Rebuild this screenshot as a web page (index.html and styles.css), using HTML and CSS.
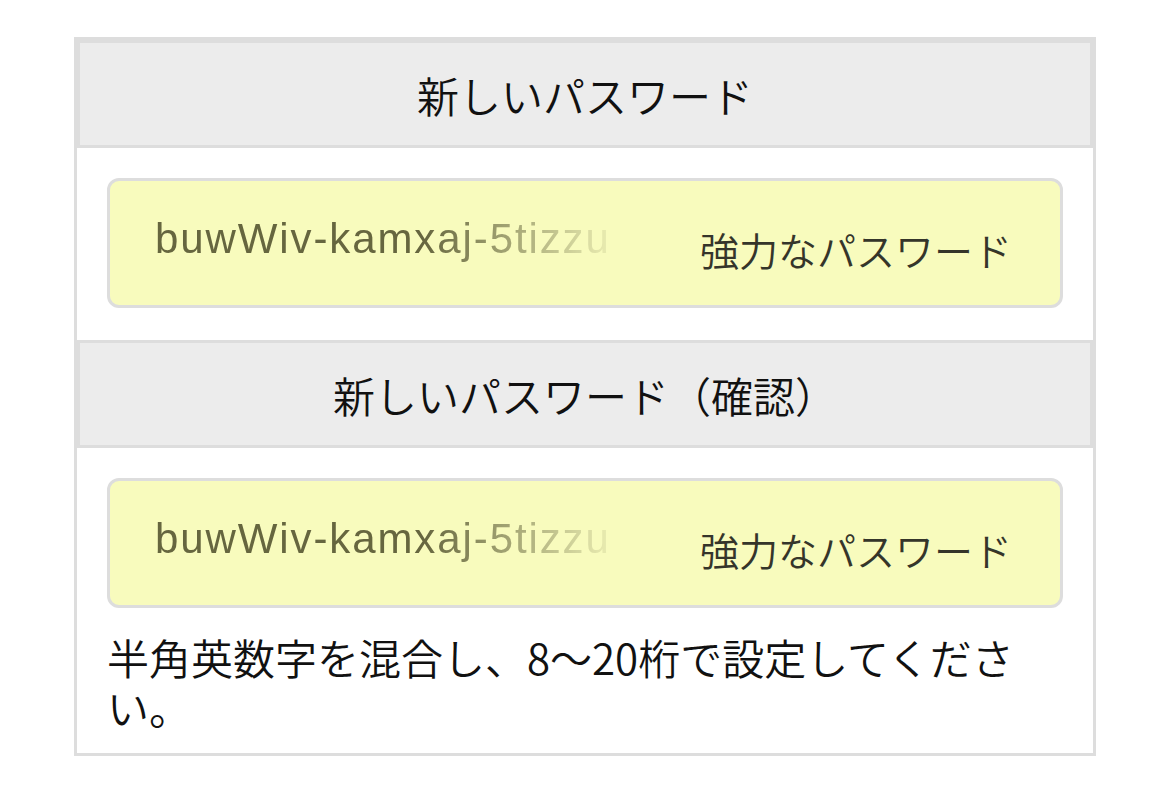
FILE: index.html
```html
<!DOCTYPE html>
<html lang="ja">
<head>
    <meta charset="UTF-8">
    <meta name="viewport" content="width=device-width, initial-scale=1.0">
    <title>新しいパスワード</title>
    <link rel="stylesheet" href="styles.css">
</head>
<body>
<div class="panel">
    <div class="panel-head">新しいパスワード</div>
    <div class="panel-cell">
        <div class="pw-field">
            <span class="pw-value">buwWiv-kamxaj-5tizzu</span>
            <span class="pw-label">強力なパスワード</span>
        </div>
    </div>
    <div class="panel-head">新しいパスワード（確認）</div>
    <div class="panel-cell last">
        <div class="pw-field">
            <span class="pw-value">buwWiv-kamxaj-5tizzu</span>
            <span class="pw-label">強力なパスワード</span>
        </div>
        <p class="hint">半角英数字を混合し、8〜20桁で設定してください。</p>
    </div>
</div>
</body>
</html>
```

FILE: styles.css
```css
body {
    font-family: "Noto Sans CJK JP", "Noto Sans", sans-serif;
    font-weight: 350;
    background-color: #ffffff;
    margin: 0;
    padding: 37px 0 0 74px;
    color: #111111;
}

.panel {
    width: 1016px;
    border: 3px solid #dddddd;
}

.panel-head {
    height: 102px;
    display: flex;
    justify-content: center;
    align-items: center;
    background-color: #ececec;
    border: 3px solid #dddddd;
    font-size: 42px;
    color: #111111;
}

.panel-cell {
    padding: 30px 30px 32px;
}

.panel-cell.last {
    padding-bottom: 21px;
}

.pw-field {
    height: 124px;
    display: flex;
    align-items: center;
    padding: 0 48px 0 45px;
    background-color: #f8fbbd;
    border: 3px solid #dddddd;
    border-radius: 12px;
}

.pw-value {
    width: 462px;
    overflow: hidden;
    white-space: nowrap;
    font-family: "Liberation Sans", Arial, sans-serif;
    font-weight: 400;
    font-size: 42px;
    letter-spacing: 1.9px;
    color: #66663f;
    margin-top: -8px;
    -webkit-mask-image: linear-gradient(to right, #000 58%, rgba(0, 0, 0, 0.06) 100%);
    mask-image: linear-gradient(to right, #000 58%, rgba(0, 0, 0, 0.06) 100%);
}

.pw-label {
    margin-left: auto;
    font-size: 39px;
    color: #35352a;
    margin-top: 12px;
}

.hint {
    margin: 24px 0 0;
    font-size: 42px;
    line-height: 50px;
    color: #111111;
}
```
